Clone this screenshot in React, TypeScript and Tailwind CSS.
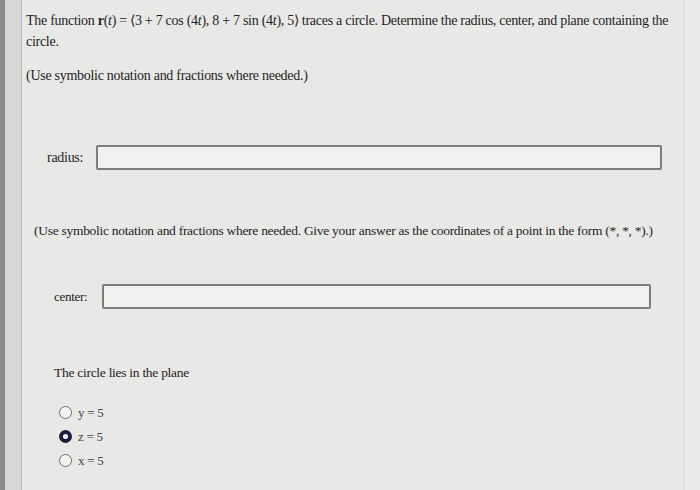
import React from "react";

function Radio({ checked, label }: { checked?: boolean; label: React.ReactNode }) {
  return (
    <label className="flex h-[24px] items-center gap-[6px]">
      {checked ? (
        <span className="h-[13px] w-[13px] rounded-full border-[4px] border-[#1d1d3d] bg-white" />
      ) : (
        <span className="h-[13px] w-[13px] rounded-full border-[1.5px] border-[#6b6b6b] bg-[#f3f3f1]" />
      )}
      <span className="text-[13px] text-[#444]">{label}</span>
    </label>
  );
}

function AnswerRow({ label, labelWidth, boxWidth }: { label: string; labelWidth: string; boxWidth: string }) {
  return (
    <div className="flex items-center">
      <span className={labelWidth}>{label}</span>
      <div className={`h-[25px] rounded-[2px] border-2 border-[#7d7d7b] bg-[#f0f0ee] ${boxWidth}`} />
    </div>
  );
}

export default function App() {
  return (
    <div className="flex h-[490px] w-[700px] overflow-hidden bg-[#e8e8e6] font-['Liberation_Serif',serif] text-[#1f1f1f]">
      <div className="w-[5px] shrink-0 bg-[#8a8a88]" />
      <div className="w-[17px] shrink-0 border-r border-[#b9b9b7] bg-[#d7d7d5]" />
      <div className="flex-1 pl-[4px] pt-[10px] text-[14px] leading-[21px] tracking-[-0.02em]">
        <p className="pr-[8px]">
          The function <b>r</b>(<i>t</i>) = ⟨3 + 7 cos (4<i>t</i>), 8 + 7 sin (4<i>t</i>), 5⟩ traces a circle. Determine
          the radius, center, and plane containing the circle.
        </p>
        <p className="mt-[13px]">(Use symbolic notation and fractions where needed.)</p>

        <div className="mt-[59px] pl-[21px]">
          <AnswerRow label="radius:" labelWidth="w-[49px]" boxWidth="w-[566px]" />
        </div>

        <p className="mt-[50px] pl-[8px] text-[13.5px]">
          (Use symbolic notation and fractions where needed. Give your answer as the coordinates of a point in the form (*, *, *).)
        </p>

        <div className="mt-[43px] pl-[28px] text-[13px]">
          <AnswerRow label="center:" labelWidth="w-[48px]" boxWidth="w-[549px]" />
        </div>

        <p className="mt-[53px] pl-[28px] text-[13.5px]">The circle lies in the plane</p>

        <div className="mt-[17px] flex flex-col pl-[33px]">
          <Radio label="y = 5" />
          <Radio checked label="z = 5" />
          <Radio label="x = 5" />
        </div>
      </div>
      <div className="w-[16px] shrink-0 border-l border-[#dcdcda] bg-[#ebebe9]" />
    </div>
  );
}
